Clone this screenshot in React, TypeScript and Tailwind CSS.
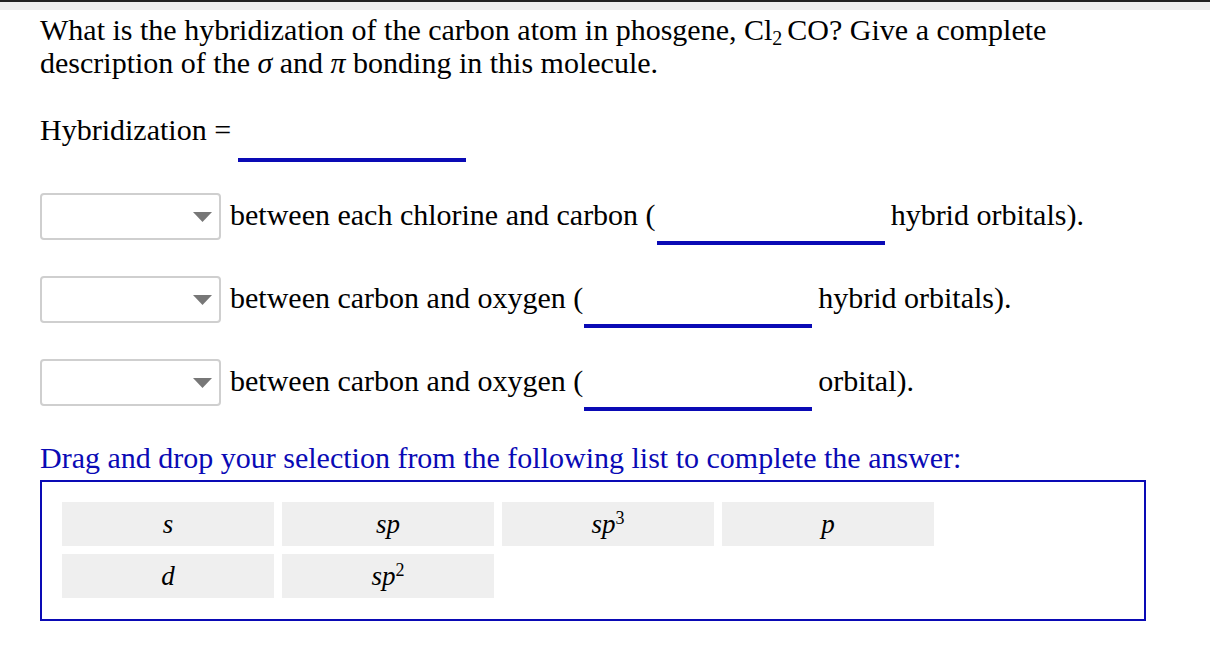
import React from "react";

const serif = "font-['Liberation_Serif','Times_New_Roman',serif]";

function Dropdown() {
  return (
    <div className="w-[181px] h-[47px] shrink-0 bg-white border-2 border-[#cfcfcf] rounded-[4px] flex items-center justify-end pr-[7px]">
      <svg width="19" height="10" viewBox="0 0 19 10">
        <path d="M0 0 L19 0 L9.5 10 Z" fill="#777" />
      </svg>
    </div>
  );
}

function Row({ label, tail }: { label: string; tail: string }) {
  return (
    <div className="flex items-start">
      <Dropdown />
      <span className="ml-[9px] mt-[5px] leading-[34px] whitespace-nowrap">{label}</span>
      <div className="ml-[1px] w-[228px] h-[52px] shrink-0 border-b-[4px] border-[#0a0ab5]" />
      <span className="ml-[6px] mt-[5px] leading-[34px] whitespace-nowrap">{tail}</span>
    </div>
  );
}

function Tile({ children }: { children?: React.ReactNode }) {
  return (
    <div className="h-[44px] bg-[#efefef] flex items-center justify-center italic text-[27px] leading-none">
      {children}
    </div>
  );
}

export default function App() {
  return (
    <div className={`w-[1210px] h-[656px] bg-white text-black ${serif} text-[30px] overflow-hidden`}>
      <div className="h-[2px] bg-[#222]" />
      <div className="h-[8px] bg-[#eeeeee]" />
      <div className="px-[40px]">
        <p className="pt-[3px] leading-[33px]">
          What is the hybridization of the carbon atom in phosgene, Cl
          <sub className="text-[20px] mr-[5px]">2</sub>CO? Give a complete
          <br />
          description of the <i>σ</i> and <i>π</i> bonding in this molecule.
        </p>

        <div className="flex items-start mt-[34px]">
          <span className="leading-[34px] whitespace-nowrap">Hybridization =</span>
          <div className="ml-[7px] w-[228px] h-[49px] shrink-0 border-b-[4px] border-[#0a0ab5]" />
        </div>

        <div className="mt-[31px] flex flex-col gap-[31px]">
          <Row label="between each chlorine and carbon (" tail="hybrid orbitals)." />
          <Row label="between carbon and oxygen (" tail="hybrid orbitals)." />
          <Row label="between carbon and oxygen (" tail="orbital)." />
        </div>

        <p className="mt-[30px] leading-[34px] text-[#0a0ab5]">
          Drag and drop your selection from the following list to complete the answer:
        </p>

        <div className="mt-[5px] w-[1106px] border-2 border-[#0a0ab5] pt-[20px] pb-[21px] pl-[20px]">
          <div className="grid grid-cols-[repeat(4,212px)] gap-[8px]">
            <Tile>s</Tile>
            <Tile>sp</Tile>
            <Tile>
              sp<sup className="not-italic text-[18px] relative top-[-6px]">3</sup>
            </Tile>
            <Tile>p</Tile>
            <Tile>d</Tile>
            <Tile>
              sp<sup className="not-italic text-[18px] relative top-[-6px]">2</sup>
            </Tile>
          </div>
        </div>
      </div>
    </div>
  );
}
